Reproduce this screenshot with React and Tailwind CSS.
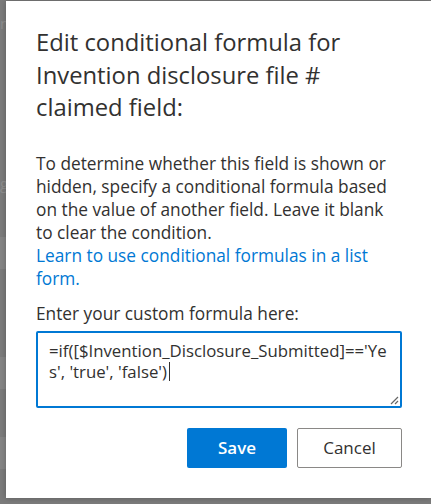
import React from "react";

export default function App() {
  return (
    <div
      className="w-[431px] h-[504px] bg-[#7b7b7b] overflow-hidden flex items-start pt-[1px]"
      style={{ fontFamily: "'Open Sans', 'Noto Sans', sans-serif" }}
    >
      {/* faint page behind the overlay */}
      <div className="w-[6px] shrink-0 flex flex-col text-[15px] text-[#8e8e8e] leading-[20px] overflow-hidden">
        <span className="mt-[12px]">na</span>
        <span className="mt-[140px]">g</span>
        <div className="mt-[44px] h-[32px] bg-[#858585]" />
        <div className="mt-[88px] h-[32px] bg-[#858585]" />
        <div className="mt-[48px] h-[32px] bg-[#858585]" />
      </div>

      {/* DIALOG */}
      <div className="w-[425px] h-[497px] shrink-0 bg-white px-[30px] pt-[25px] shadow-[0_0_6px_rgba(0,0,0,0.25)]">

        <h1 className="text-[23.8px] leading-[32.5px] text-[#323130] font-normal">
          Edit conditional formula for Invention disclosure file # claimed field:
        </h1>

        <p className="mt-[28px] pr-[8px] text-[17.3px] leading-[23px] text-[#323130]">
          To determine whether this field is shown or hidden, specify a conditional formula based on the value of another field. Leave it blank to clear the condition.
          <br />
          <a className="text-[#0078d4]">
            Learn to use conditional formulas in a list form.
          </a>
        </p>

        <p className="mt-[12px] text-[17.3px] leading-[23px] text-[#323130]">
          Enter your custom formula here:
        </p>

        {/* TEXTAREA */}
        <div className="relative mt-[6px] w-[366px] h-[77px] border-2 border-[#0078d4] rounded-[2px] pl-[11px] pt-[7px] text-[16.8px] leading-[21px] text-[#323130]">
          <span className="block whitespace-nowrap">=if([$Invention_Disclosure_Submitted]=='Ye</span>
          <span className="flex items-center whitespace-nowrap">
            s', 'true', 'false')
            <span className="inline-block w-[1px] h-[19px] bg-[#323130] ml-[2px]" />
          </span>
          <svg className="absolute right-[1px] bottom-[1px]" width="10" height="10" viewBox="0 0 10 10">
            <path d="M9 2 L2 9 M9 6 L6 9" stroke="#666" strokeWidth="1.2" />
          </svg>
        </div>

        {/* BUTTONS */}
        <div className="mt-[20px] flex justify-end gap-[10px] w-[366px]">
          <button className="w-[100px] h-[40px] bg-[#0078d4] text-white text-[17px] font-semibold rounded-[2px]">
            Save
          </button>
          <button className="w-[105px] h-[40px] border border-[#8a8886] bg-white text-[#323130] text-[17px] rounded-[2px]">
            Cancel
          </button>
        </div>
      </div>
    </div>
  );
}
